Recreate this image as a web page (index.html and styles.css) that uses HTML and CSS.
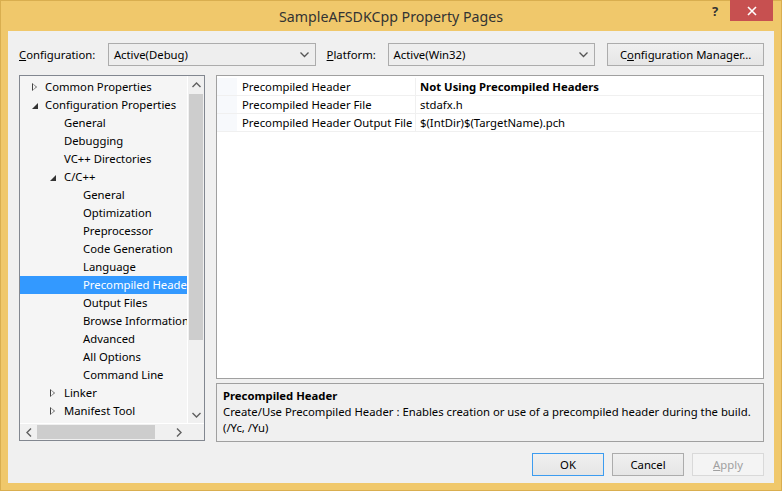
FILE: index.html
```html
<!doctype html>
<html>
<head>
<meta charset="utf-8">
<title>SampleAFSDKCpp Property Pages</title>
<link rel="stylesheet" href="styles.css">
</head>
<body>
<div class="window">
    <div class="titleBar">
        <span class="title">SampleAFSDKCpp Property Pages</span>
        <span class="helpBtn">?</span>
        <span class="closeBtn">
            <svg width="10" height="10" viewBox="0 0 10 10"><path d="M1 1L9 9M9 1L1 9" stroke="#fff" stroke-width="1.6"/></svg>
        </span>
    </div>
    <div class="client">
        <div class="topRow">
            <label class="lbl lblConfig"><u>C</u>onfiguration:</label>
            <div class="combo comboConfig">
                <span>Active(Debug)</span>
                <svg width="9" height="6" viewBox="0 0 9 6"><path d="M0.5 0.5L4.5 4.5L8.5 0.5" fill="none" stroke="#555" stroke-width="1.3"/></svg>
            </div>
            <label class="lbl lblPlatform"><u>P</u>latform:</label>
            <div class="combo comboPlatform">
                <span>Active(Win32)</span>
                <svg width="9" height="6" viewBox="0 0 9 6"><path d="M0.5 0.5L4.5 4.5L8.5 0.5" fill="none" stroke="#555" stroke-width="1.3"/></svg>
            </div>
            <button class="btn btnManager" type="button">C<u>o</u>nfiguration Manager...</button>
        </div>

        <div class="panes">
            <div class="tree">
                <div class="treeBody">
                    <ul class="treeList">
                        <li class="lv0"><i class="arrow closed"></i>Common Properties</li>
                        <li class="lv0"><i class="arrow open"></i>Configuration Properties</li>
                        <li class="lv1">General</li>
                        <li class="lv1">Debugging</li>
                        <li class="lv1">VC++ Directories</li>
                        <li class="lv1 hasArrow"><i class="arrow open"></i>C/C++</li>
                        <li class="lv2">General</li>
                        <li class="lv2">Optimization</li>
                        <li class="lv2">Preprocessor</li>
                        <li class="lv2">Code Generation</li>
                        <li class="lv2">Language</li>
                        <li class="lv2 selected">Precompiled Headers</li>
                        <li class="lv2">Output Files</li>
                        <li class="lv2">Browse Information</li>
                        <li class="lv2">Advanced</li>
                        <li class="lv2">All Options</li>
                        <li class="lv2">Command Line</li>
                        <li class="lv1 hasArrow"><i class="arrow closed"></i>Linker</li>
                        <li class="lv1 hasArrow"><i class="arrow closed"></i>Manifest Tool</li>
                    </ul>
                    <div class="vScroll">
                        <span class="scrollArrow">
                            <svg width="9" height="6" viewBox="0 0 9 6"><path d="M0.5 5L4.5 1L8.5 5" fill="none" stroke="#606060" stroke-width="1.4"/></svg>
                        </span>
                        <div class="vTrack"><div class="vThumb"></div></div>
                        <span class="scrollArrow">
                            <svg width="9" height="6" viewBox="0 0 9 6"><path d="M0.5 1L4.5 5L8.5 1" fill="none" stroke="#606060" stroke-width="1.4"/></svg>
                        </span>
                    </div>
                </div>
                <div class="hScroll">
                    <span class="scrollArrow">
                        <svg width="6" height="9" viewBox="0 0 6 9"><path d="M5 0.5L1 4.5L5 8.5" fill="none" stroke="#606060" stroke-width="1.4"/></svg>
                    </span>
                    <div class="hTrack"><div class="hThumb"></div></div>
                    <span class="scrollArrow">
                        <svg width="6" height="9" viewBox="0 0 6 9"><path d="M1 0.5L5 4.5L1 8.5" fill="none" stroke="#606060" stroke-width="1.4"/></svg>
                    </span>
                    <span class="corner"></span>
                </div>
            </div>

            <div class="rightSide">
                <div class="grid">
                    <div class="gridRow">
                        <span class="margin"></span>
                        <span class="name">Precompiled Header</span>
                        <span class="value bold">Not Using Precompiled Headers</span>
                    </div>
                    <div class="gridRow">
                        <span class="margin"></span>
                        <span class="name">Precompiled Header File</span>
                        <span class="value">stdafx.h</span>
                    </div>
                    <div class="gridRow">
                        <span class="margin"></span>
                        <span class="name">Precompiled Header Output File</span>
                        <span class="value">$(IntDir)$(TargetName).pch</span>
                    </div>
                </div>
                <div class="desc">
                    <h4>Precompiled Header</h4>
                    <p>Create/Use Precompiled Header : Enables creation or use of a precompiled header during the build.<br>(/Yc, /Yu)</p>
                </div>
            </div>
        </div>

        <div class="bottomRow">
            <button class="btn btnOk" type="button">OK</button>
            <button class="btn" type="button">Cancel</button>
            <button class="btn btnDisabled" type="button"><u>A</u>pply</button>
        </div>
    </div>
</div>
</body>
</html>
```

FILE: styles.css
```css
*{ margin:0; padding:0; box-sizing:border-box}
ul{ list-style:none}
html,body{ width:782px; height:491px; overflow:hidden}
body{ font-family:"Noto Sans","Open Sans",sans-serif; font-size:11.3px; color:#000}
u{ text-decoration:underline}

.window{ width:782px; height:491px; background:#F0C86B; border:1px solid #D9AE4F; display:flex; flex-direction:column}

.titleBar{ height:30px; position:relative; display:flex; justify-content:center; align-items:center}
.title{ font-size:14.2px; color:#333; padding-top:1px}
.helpBtn{ position:absolute; top:1px; left:711px; font-weight:bold; font-size:13px; color:#333}
.closeBtn{ position:absolute; top:-1px; right:8px; width:43px; height:21px; background:#C75050; display:flex; align-items:center; justify-content:center}

.client{ flex:1; margin:0 7px 7px; background:#F0F0F0; padding:12px 10px 0 11px; display:flex; flex-direction:column}

.topRow{ display:flex; align-items:center; height:23px; white-space:nowrap}
.lbl{ color:#000}
.lblConfig{ width:89px}
.lblPlatform{ width:61px; margin-left:11px}
.combo{ height:23px; border:1px solid #ACACAC; background:#EEEEEE; display:flex; align-items:center; justify-content:space-between; padding:0 6px 0 5px}
.comboConfig{ width:208px}
.comboPlatform{ width:208px}
.btn{ font-family:inherit; font-size:11.3px; height:23px; border:1px solid #ACACAC; background:linear-gradient(#F0F0F0,#E5E5E5); color:#000}
.btnManager{ width:157px; margin-left:12px}

.panes{ display:flex; margin-top:9px; gap:11px}

.tree{ width:186px; height:366px; border:1px solid #828790; background:#F5F5F5; display:flex; flex-direction:column}
.treeBody{ flex:1; display:flex; min-height:0}
.treeList{ flex:1; padding-top:2px; overflow:hidden; white-space:nowrap}
.treeList li{ height:18px; line-height:18px; position:relative; overflow:hidden}
.treeList .lv0{ padding-left:25px}
.treeList .lv1{ padding-left:44px}
.treeList .lv2{ padding-left:63px}
.treeList .selected{ background:#3399FF; color:#fff}
.arrow{ position:absolute; top:5px; width:8px; height:9px}
.lv0 .arrow{ left:12px}
.lv1 .arrow{ left:30px}
.arrow.closed{ width:0; height:0; border-style:solid; border-width:4px 0 4px 5px; border-color:transparent transparent transparent #444}
.arrow.closed:after{ content:""; position:absolute; left:-4px; top:-3px; border-style:solid; border-width:3px 0 3px 3px; border-color:transparent transparent transparent #F5F5F5}
.arrow.open{ top:7px; width:0; height:0; border-style:solid; border-width:0 0 6px 6px; border-color:transparent transparent #333 transparent}

.vScroll{ width:17px; background:#F0F0F0; display:flex; flex-direction:column; border-left:1px solid #fff}
.scrollArrow{ height:17px; display:flex; align-items:center; justify-content:center; flex-shrink:0}
.vTrack{ flex:1; padding:1px 1px 0}
.vThumb{ height:246px; background:#CDCDCD}

.hScroll{ height:17px; display:flex; background:#F0F0F0; border-top:1px solid #fff}
.hScroll .scrollArrow{ width:17px}
.hTrack{ flex:1; padding:1px 0}
.hThumb{ width:118px; height:100%; background:#CDCDCD}
.corner{ width:17px}

.rightSide{ width:548px; display:flex; flex-direction:column; gap:4px}
.grid{ height:304px; border:1px solid #A0A0A0; background:#fff; padding-top:2px; white-space:nowrap}
.gridRow{ display:flex; height:18px; line-height:17px; border-bottom:1px solid #F0F0F0}
.gridRow .margin{ width:20px; background:#F7F9FC}
.gridRow .name{ width:179px; padding-left:5px; border-right:1px solid #F0F0F0}
.gridRow .value{ flex:1; padding-left:4px}
.bold{ font-weight:bold}

.desc{ height:59px; border:1px solid #A0A0A0; background:#F0F0F0; padding:4px 6px}
.desc h4{ font-size:11.3px; font-weight:bold; line-height:16px}
.desc p{ line-height:16px}

.bottomRow{ display:flex; justify-content:flex-end; gap:8px; margin-top:11px}
.bottomRow .btn{ width:72px}
.btnOk{ border-color:#3C9CF0}
.btnDisabled{ border-color:#D9D9D9; background:#F4F4F4; color:#A0A0A0}
```
